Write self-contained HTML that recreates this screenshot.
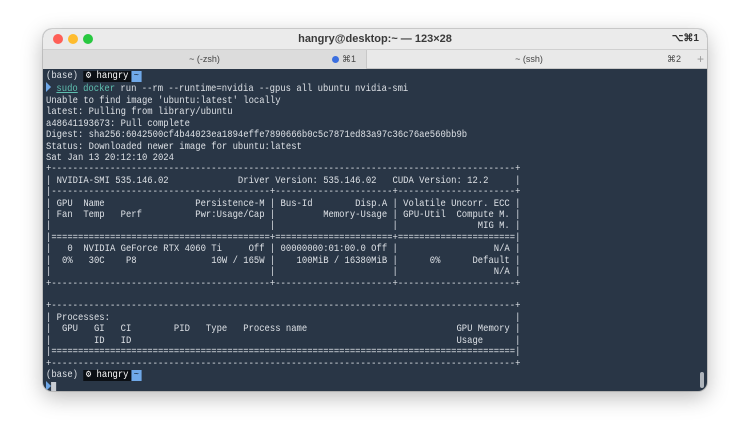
<!DOCTYPE html>
<html><head><meta charset="utf-8"><style>
*{margin:0;padding:0;box-sizing:border-box}
body{width:750px;height:448px;background:#fff;position:relative;overflow:hidden;font-family:"Liberation Sans",sans-serif}
.win{position:absolute;left:43px;top:29px;width:664px;height:362px;border-radius:9px;overflow:hidden;box-shadow:0 6px 22px rgba(0,0,0,.28),0 0 0 1px rgba(0,0,0,.15);background:#293646}
.title{position:absolute;left:0;top:0;width:664px;height:20px;background:#ebebeb;text-align:center;font-size:11px;font-weight:bold;color:#3a3a3a;line-height:20px}
.dot{position:absolute;top:5px;width:10px;height:10px;border-radius:50%}
.kbd{position:absolute;right:8px;top:0;font-size:10px;color:#333}
.tabs{position:absolute;left:0;top:20px;width:664px;height:20px;background:#e9e9e9;border-top:1px solid #d0d0d0;border-bottom:1px solid #c8c8c8;font-size:9px;color:#444;line-height:18px}
.t1{position:absolute;left:0;top:0;width:324px;height:19px;background:#dcdcdc;border-right:1px solid #c8c8c8;text-align:center}
.t2{position:absolute;left:324px;top:0;width:324px;height:19px;text-align:center}
.term{position:absolute;left:3px;top:42px;font-family:"Liberation Mono",monospace;font-size:10.5px;line-height:11.42px;color:#dde1e6;white-space:pre;transform:scaleX(0.846);transform-origin:0 0}
.box{display:inline-block;background:#0b0f14;color:#fff;padding:0 3px;line-height:11px;height:11px}
.arr{display:inline-block;background:#6fa8e8;color:#1a2a3a;padding:0 3px;line-height:11px;height:11px}
.tri{display:inline-block;width:0;height:0;border-top:5px solid transparent;border-bottom:5px solid transparent;border-left:6px solid #6fa8e8;vertical-align:-1px}
.g{color:#5fc0b0}
.cur{display:inline-block;width:6px;height:10px;background:#c8ccd2;vertical-align:-2px}
.sb{position:absolute;right:3px;top:343px;width:4px;height:16px;border-radius:2px;background:#aeb4bb}
</style></head><body>
<div class="win">
<div class="title">hangry@desktop:~ — 123×28
<div class="dot" style="left:10px;background:#fe5f57"></div>
<div class="dot" style="left:25px;background:#febc2e"></div>
<div class="dot" style="left:40px;background:#28c840"></div>
<span class="kbd">⌥⌘1</span></div>
<div class="tabs">
<div class="t1">~ (-zsh)<span style="position:absolute;right:10px"><span style="display:inline-block;width:7px;height:7px;border-radius:50%;background:#3b6fe0;vertical-align:-1px"></span> ⌘1</span></div>
<div class="t2">~ (ssh)<span style="position:absolute;right:10px">⌘2</span></div>
<div style="position:absolute;right:3px;top:0;color:#999;font-size:12px">+</div>
</div>
<div class="term">(base) <span class="box">⚙ hangry</span><span class="arr">~</span>
<span class="tri"></span> <span class="g" style="text-decoration:underline">sudo</span> <span class="g">docker</span> run --rm --runtime=nvidia --gpus all ubuntu nvidia-smi
Unable to find image 'ubuntu:latest' locally
latest: Pulling from library/ubuntu
a48641193673: Pull complete
Digest: sha256:6042500cf4b44023ea1894effe7890666b0c5c7871ed83a97c36c76ae560bb9b
Status: Downloaded newer image for ubuntu:latest
Sat Jan 13 20:12:10 2024
+---------------------------------------------------------------------------------------+
| NVIDIA-SMI 535.146.02             Driver Version: 535.146.02   CUDA Version: 12.2     |
|-----------------------------------------+----------------------+----------------------+
| GPU  Name                 Persistence-M | Bus-Id        Disp.A | Volatile Uncorr. ECC |
| Fan  Temp   Perf          Pwr:Usage/Cap |         Memory-Usage | GPU-Util  Compute M. |
|                                         |                      |               MIG M. |
|=========================================+======================+======================|
|   0  NVIDIA GeForce RTX 4060 Ti     Off | 00000000:01:00.0 Off |                  N/A |
|  0%   30C    P8              10W / 165W |    100MiB / 16380MiB |      0%      Default |
|                                         |                      |                  N/A |
+-----------------------------------------+----------------------+----------------------+

+---------------------------------------------------------------------------------------+
| Processes:                                                                            |
|  GPU   GI   CI        PID   Type   Process name                            GPU Memory |
|        ID   ID                                                             Usage      |
|=======================================================================================|
+---------------------------------------------------------------------------------------+
(base) <span class="box">⚙ hangry</span><span class="arr">~</span>
<span class="tri"></span><span class="cur"></span></div>
<div class="sb"></div>
</div>
</body></html>
